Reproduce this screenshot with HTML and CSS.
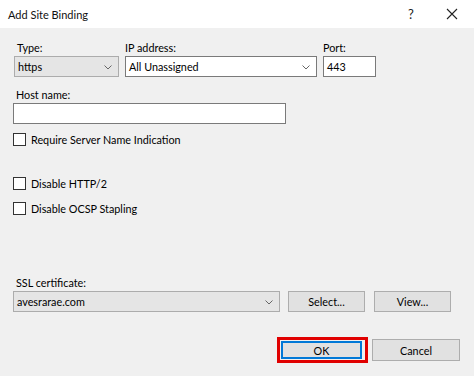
FILE: index.html
```html
<!DOCTYPE html>
<html>
<head>
<meta charset="utf-8">
<link rel="stylesheet" href="styles.css">
</head>
<body>
<div class="dialog">
  <div class="titlebar">
    <span class="title">Add Site Binding</span>
    <span class="help">?</span>
    <span class="close"><svg width="12" height="12" viewBox="0 0 12 12"><path d="M1 1L11 11M11 1L1 11" stroke="#222" stroke-width="1.1" fill="none"/></svg></span>
  </div>
  <div class="content">
    <div class="row1">
      <div class="field f-type">
        <div class="label">Type:</div>
        <div class="combo grey"><span>https</span><svg class="chev" width="8" height="5" viewBox="0 0 8 5"><path d="M0.5 0.5L4 4L7.5 0.5" stroke="#666" fill="none"/></svg></div>
      </div>
      <div class="field f-ip">
        <div class="label">IP address:</div>
        <div class="combo white"><span>All Unassigned</span><svg class="chev" width="8" height="5" viewBox="0 0 8 5"><path d="M0.5 0.5L4 4L7.5 0.5" stroke="#666" fill="none"/></svg></div>
      </div>
      <div class="field f-port">
        <div class="label">Port:</div>
        <div class="textbox"><span>443</span></div>
      </div>
    </div>
    <div class="host">
      <div class="label">Host name:</div>
      <div class="textbox host-input"></div>
    </div>
    <div class="check c-sni"><span class="box"></span><span>Require Server Name Indication</span></div>
    <div class="check c-http2"><span class="box"></span><span>Disable HTTP/2</span></div>
    <div class="check c-ocsp"><span class="box"></span><span>Disable OCSP Stapling</span></div>
    <div class="ssl">
      <div class="label">SSL certificate:</div>
      <div class="ssl-row">
        <div class="combo grey ssl-combo"><span>avesrarae.com</span><svg class="chev" width="8" height="5" viewBox="0 0 8 5"><path d="M0.5 0.5L4 4L7.5 0.5" stroke="#666" fill="none"/></svg></div>
        <div class="btn b-select">Select...</div>
        <div class="btn b-view">View...</div>
      </div>
    </div>
    <div class="footer">
      <div class="highlight"><div class="btn ok">OK</div></div>
      <div class="btn cancel">Cancel</div>
    </div>
  </div>
</div>
</body>
</html>
```
FILE: styles.css
```css
* { box-sizing: border-box; }
html, body { margin: 0; padding: 0; }
body {
  width: 474px;
  height: 376px;
  overflow: hidden;
  font-family: Lato, "Noto Sans", sans-serif;
  font-size: 10.8px;
  color: #000;
  background: #f0f0f0;
}
.dialog { width: 474px; height: 376px; background: #f0f0f0; }
.titlebar {
  height: 28px;
  background: #fff;
  display: flex;
  align-items: center;
  padding-left: 8px;
  font-size: 11px;
}
.title { flex: 1; color: #111; }
.help { width: 10px; margin-right: 28px; color: #222; font-size: 13px; margin-left: 4px; }
.close { width: 12px; height: 12px; margin-right: 16px; display: flex; }
.content { padding: 0 0 0 13px; }
.label { height: 15px; line-height: 15px; margin-bottom: 1px; padding-left: 3px; }
.row1 { display: flex; margin-top: 12px; }
.f-type { width: 105px; margin-left: 1px; }
.f-ip { width: 192px; margin-left: 6px; }
.f-port { width: 53px; margin-left: 6px; }
.f-ip .label, .f-port .label { padding-left: 0; }
.combo, .textbox {
  height: 21px;
  border: 1px solid #acacac;
  display: flex;
  align-items: center;
  padding: 0 6px 0 3px;
  line-height: 15px;
}
.combo span, .textbox span { flex: 1; }
.grey { background: #e5e5e5; }
.white, .textbox { background: #fff; }
.textbox { border-color: #7a7a7a; }
.f-ip .combo { border-color: #7a7a7a; }
.chev { flex: none; margin-top: 1px; }
.host { margin-top: 10px; }
.host-input { width: 273px; height: 21px; }
.check { display: flex; align-items: center; height: 15px; }
.box { width: 13px; height: 13px; border: 1px solid #333; background: #fff; margin-right: 5px; flex: none; }
.c-sni { margin-top: 8px; }
.c-http2 { margin-top: 29px; }
.c-ocsp { margin-top: 10px; }
.ssl { margin-top: 59px; }
.ssl .label { padding-left: 3px; }
.ssl-row { display: flex; }
.ssl-combo { width: 267px; }
.btn {
  height: 21px;
  background: #e1e1e1;
  border: 1px solid #adadad;
  display: flex;
  align-items: center;
  justify-content: center;
}
.b-select { width: 77px; margin-left: 8px; }
.b-view { width: 77px; margin-left: 9px; }
.footer { display: flex; align-items: center; margin-top: 25px; margin-left: 264px; }
.highlight { border: 3px solid #e00000; padding: 1px; width: 91px; height: 26px; }
.ok { width: 81px; height: 18px; border: 1px solid #0078d7; box-shadow: inset 0 0 0 1px #0078d7; }
.cancel { width: 88px; height: 22px; margin-left: 4px; }
```
